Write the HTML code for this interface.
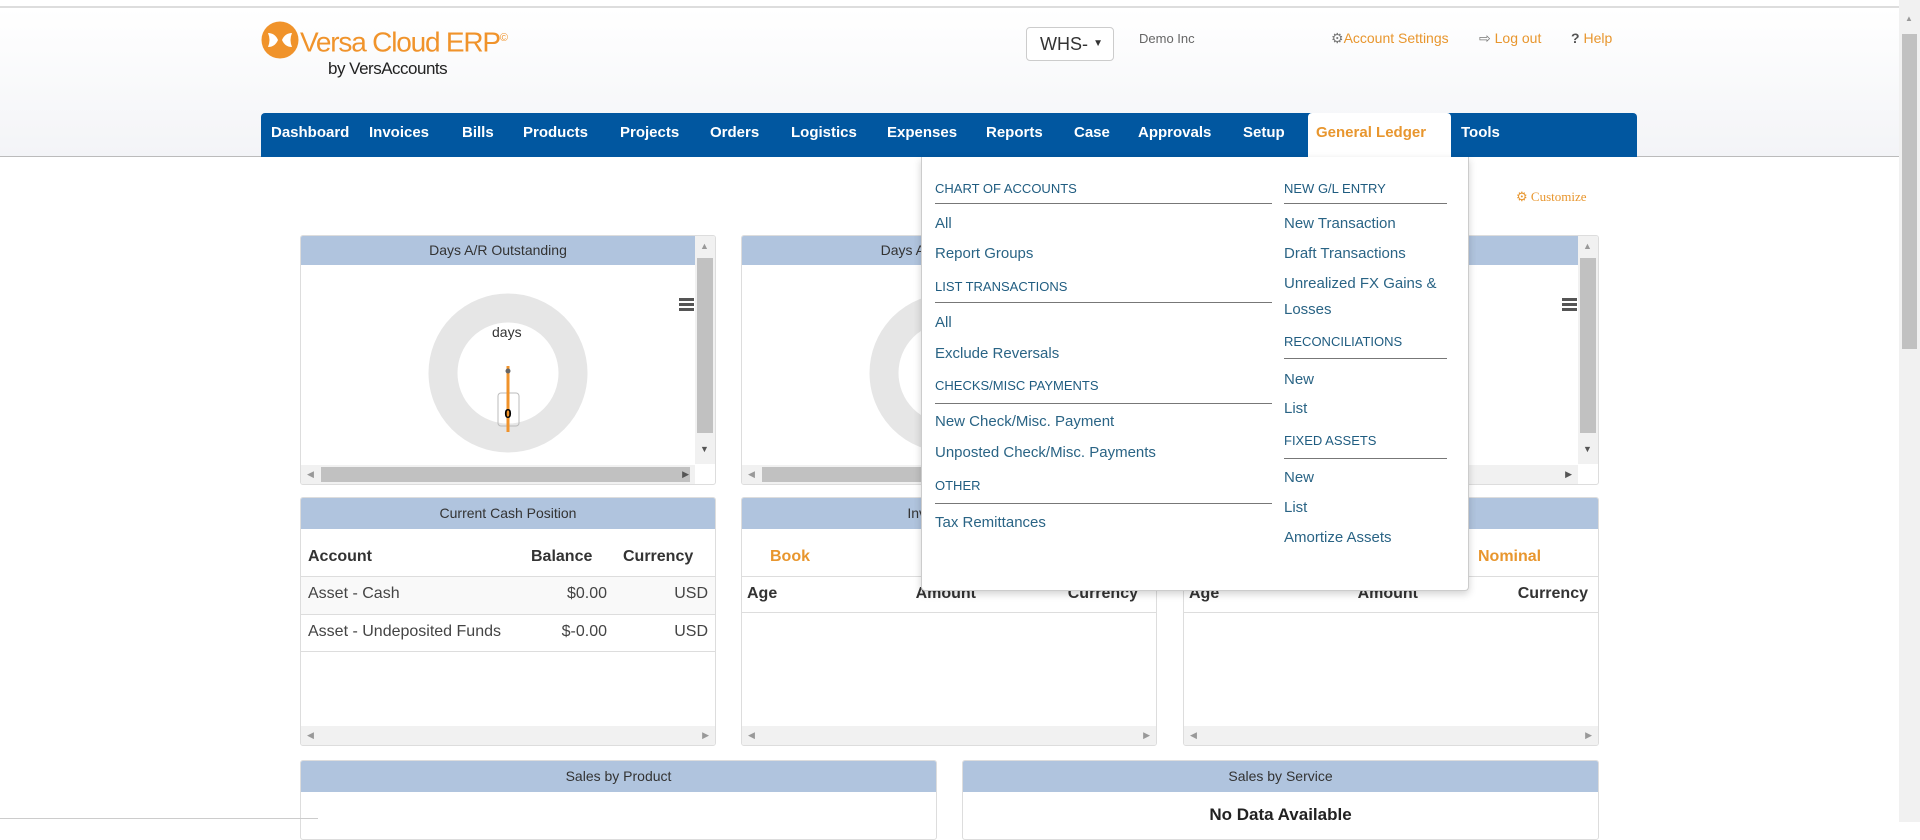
<!DOCTYPE html>
<html><head><meta charset="utf-8"><style>
*{margin:0;padding:0;box-sizing:border-box}
body{width:1920px;height:822px;overflow:hidden;position:relative;background:#fff;font-family:"Liberation Sans",sans-serif;color:#333}
.a{position:absolute;white-space:nowrap}
.hdr{position:absolute;left:0;top:6px;width:1899px;height:151px;background:linear-gradient(#fff,#f3f4f7);border-top:2px solid #ddd;border-bottom:1px solid #bbb}
.nav{position:absolute;left:261px;top:113px;width:1376px;height:44px;background:#0157a0;border-radius:4px 4px 0 0}
.nv{position:absolute;top:124px;color:#fff;font-weight:bold;font-size:15px;line-height:18px}
.w{position:absolute;border:1px solid #ddd;border-radius:3px;background:#fff;overflow:hidden}
.wh{position:absolute;left:0;top:0;right:0;background:#b0c4de;text-align:center;font-size:14px;color:#333}
.hs{position:absolute;left:0;right:0;bottom:0;height:19px;background:#f1f1f1;font-size:9px;color:#999}
.hs .l{position:absolute;left:6px;top:4px}.hs .r{position:absolute;right:6px;top:4px}
.dd{position:absolute;left:921px;top:157px;width:548px;height:434px;background:#fff;border:1px solid #ccc;border-top:none;border-radius:0 0 4px 4px;box-shadow:0 3px 8px rgba(0,0,0,.18)}
.dh{position:absolute;font-size:13px;color:#1f5c80;line-height:16px}
.dl{position:absolute;font-size:15px;color:#2a6485;line-height:18px}
.ln{position:absolute;height:1px;background:#777}
.th{position:absolute;font-weight:bold;font-size:16px;color:#333;line-height:20px}
.td{position:absolute;font-size:16px;color:#444;line-height:20px}
.hl{position:absolute;height:1px;background:#ddd}
</style></head><body>
<div class="hdr"></div>
<svg class="a" style="left:261px;top:21px" width="38" height="38" viewBox="0 0 38 38"><circle cx="19" cy="19" r="18.5" fill="#f0932b"/><path d="M7 12 Q14 12 17 19 Q14 26 7 26 Q10 19 7 12Z M31 12 Q24 12 21 19 Q24 26 31 26 Q28 19 31 12Z" fill="#fff"/></svg>
<div class="a" style="left:300px;top:21px;font-size:28px;color:#f0932b;letter-spacing:-1.2px;line-height:34px">Versa Cloud ERP<sup style="font-size:11px">©</sup></div>
<div class="a" style="left:328px;top:59px;font-size:17px;color:#222;letter-spacing:-.5px">by VersAccounts</div>
<div class="a" style="left:1026px;top:27px;width:88px;height:34px;border:1px solid #ccc;border-radius:4px;background:#fff;font-size:18px;line-height:32px;padding-left:13px;color:#333">WHS- <span style="font-size:10px;position:absolute;right:10px">▼</span></div>
<div class="a" style="left:1139px;top:31px;font-size:13px;color:#666">Demo Inc</div>
<div class="a" style="left:1331px;top:30px;font-size:14px;color:#e8962e"><span style="color:#777">⚙</span>Account Settings</div>
<div class="a" style="left:1479px;top:30px;font-size:14px;color:#e8962e"><span style="color:#777">⇨</span> Log out</div>
<div class="a" style="left:1571px;top:30px;font-size:14px;color:#e8962e"><b style="color:#555">?</b> Help</div>
<div class="a" style="left:1899px;top:0;width:21px;height:822px;background:#f1f1f1"></div>
<div class="a" style="left:1902px;top:34px;width:15px;height:315px;background:#c1c1c1"></div>
<div class="a" style="left:1905px;top:14px;font-size:8px;color:#999">▲</div>
<div class="nav"></div>
<div class="a" style="left:1308px;top:113px;width:143px;height:46px;background:#fff;border-radius:4px 4px 0 0"></div>
<div class="nv" style="left:271px">Dashboard</div>
<div class="nv" style="left:369px">Invoices</div>
<div class="nv" style="left:462px">Bills</div>
<div class="nv" style="left:523px">Products</div>
<div class="nv" style="left:620px">Projects</div>
<div class="nv" style="left:710px">Orders</div>
<div class="nv" style="left:791px">Logistics</div>
<div class="nv" style="left:887px">Expenses</div>
<div class="nv" style="left:986px">Reports</div>
<div class="nv" style="left:1074px">Case</div>
<div class="nv" style="left:1138px">Approvals</div>
<div class="nv" style="left:1243px">Setup</div>
<div class="nv" style="left:1316px;color:#e8962e">General Ledger</div>
<div class="nv" style="left:1461px">Tools</div>
<div class="a" style="left:1516px;top:189px;font-size:13px;color:#e8962e;font-family:'Liberation Serif',serif">⚙ Customize</div>

<div class="w" style="left:300px;top:235px;width:416px;height:250px">
 <div class="wh" style="right:20px;height:29px;line-height:29px">Days A/R Outstanding</div>
 <div class="a" style="right:0;top:0;width:20px;height:228px;background:#f1f1f1;font-size:9px;color:#999"><span style="position:absolute;left:5px;top:5px">▲</span><div style="position:absolute;left:2px;top:22px;width:16px;height:175px;background:#c1c1c1"></div><span style="position:absolute;left:5px;top:208px;color:#555">▼</span></div>
 <div class="hs" style="right:20px"><span class="l">◀</span><div style="position:absolute;left:20px;top:2px;width:369px;height:15px;background:#c1c1c1"></div><span class="r" style="color:#555">▶</span></div>
 <svg class="a" style="left:127px;top:57px" width="160" height="160"><circle cx="80" cy="80" r="65" fill="none" stroke="#e6e6e6" stroke-width="29"/><rect x="70" y="100" width="21" height="33" rx="3" fill="none" stroke="#bbb"/><line x1="80" y1="73" x2="80" y2="139" stroke="#f0932b" stroke-width="3"/><circle cx="80" cy="78" r="2.5" fill="#666"/><text x="80" y="125" text-anchor="middle" font-size="13" font-weight="bold" font-family="Liberation Sans">0</text></svg>
 <div class="a" style="left:191px;top:88px;font-size:14px;color:#333">days</div>
 <div class="a" style="left:378px;top:62px;width:15px;height:3px;background:#555;box-shadow:0 5px #555,0 10px #555"></div>
</div>
<div class="w" style="left:741px;top:235px;width:416px;height:250px">
 <div class="wh" style="height:29px;line-height:29px">Days A/P Outstanding</div>
 <div class="hs"><span class="l">◀</span><div style="position:absolute;left:20px;top:2px;width:369px;height:15px;background:#c1c1c1"></div></div>
 <svg class="a" style="left:127px;top:57px" width="160" height="160"><circle cx="80" cy="80" r="65" fill="none" stroke="#e6e6e6" stroke-width="29"/></svg>
</div>
<div class="w" style="left:1183px;top:235px;width:416px;height:250px">
 <div class="wh" style="right:20px;height:29px;line-height:29px">Days Outstanding</div>
 <div class="a" style="right:0;top:0;width:20px;height:228px;background:#f1f1f1;font-size:9px;color:#999"><span style="position:absolute;left:5px;top:5px">▲</span><div style="position:absolute;left:2px;top:22px;width:16px;height:175px;background:#c1c1c1"></div><span style="position:absolute;left:5px;top:208px;color:#555">▼</span></div>
 <div class="hs" style="right:20px"><span class="r" style="color:#555">▶</span></div>
 <div class="a" style="left:378px;top:62px;width:15px;height:3px;background:#555;box-shadow:0 5px #555,0 10px #555"></div>
</div>

<div class="w" style="left:300px;top:497px;width:416px;height:249px">
 <div class="wh" style="height:31px;line-height:31px">Current Cash Position</div>
 <div class="th" style="left:7px;top:49px">Account</div>
 <div class="th" style="left:230px;top:49px">Balance</div>
 <div class="th" style="left:322px;top:49px">Currency</div>
 <div class="hl" style="left:0;right:0;top:78px"></div>
 <div class="a" style="left:0;right:0;top:79px;height:37px;background:#f9f9f9"></div>
 <div class="td" style="left:7px;top:86px">Asset - Cash</div>
 <div class="td" style="right:108px;top:86px">$0.00</div>
 <div class="td" style="right:7px;top:86px">USD</div>
 <div class="hl" style="left:0;right:0;top:116px"></div>
 <div class="td" style="left:7px;top:124px">Asset - Undeposited Funds</div>
 <div class="td" style="right:108px;top:124px">$-0.00</div>
 <div class="td" style="right:7px;top:124px">USD</div>
 <div class="hl" style="left:0;right:0;top:153px"></div>
 <div class="hs"><span class="l">◀</span><span class="r">▶</span></div>
</div>
<div class="w" style="left:741px;top:497px;width:416px;height:249px">
 <div class="wh" style="height:31px;line-height:31px">Invoice Aging</div>
 <div class="th" style="left:28px;top:49px;color:#e8962e">Book</div>
 <div class="hl" style="left:0;right:0;top:78px"></div>
 <div class="th" style="left:5px;top:86px">Age</div>
 <div class="th" style="right:180px;top:86px">Amount</div>
 <div class="th" style="right:18px;top:86px">Currency</div>
 <div class="hl" style="left:0;right:0;top:114px"></div>
 <div class="hs"><span class="l">◀</span><span class="r">▶</span></div>
</div>
<div class="w" style="left:1183px;top:497px;width:416px;height:249px">
 <div class="wh" style="height:31px;line-height:31px">Bill Aging</div>
 <div class="th" style="left:294px;top:49px;color:#e8962e">Nominal</div>
 <div class="hl" style="left:0;right:0;top:78px"></div>
 <div class="th" style="left:5px;top:86px">Age</div>
 <div class="th" style="right:180px;top:86px">Amount</div>
 <div class="th" style="right:10px;top:86px">Currency</div>
 <div class="hl" style="left:0;right:0;top:114px"></div>
 <div class="hs"><span class="l">◀</span><span class="r">▶</span></div>
</div>

<div class="w" style="left:300px;top:760px;width:637px;height:80px">
 <div class="wh" style="height:31px;line-height:31px">Sales by Product</div>
</div>
<div class="w" style="left:962px;top:760px;width:637px;height:80px">
 <div class="wh" style="height:31px;line-height:31px">Sales by Service</div>
 <div class="a" style="left:0;right:0;top:44px;text-align:center;font-weight:bold;font-size:17px;color:#222">No Data Available</div>
</div>
<div class="a" style="left:0;top:818px;width:318px;height:1px;background:#ccc"></div>

<div class="dd">
 <div class="dh" style="left:13px;top:24px">CHART OF ACCOUNTS</div>
 <div class="ln" style="left:13px;top:46px;width:337px"></div>
 <div class="dl" style="left:13px;top:58px">All</div>
 <div class="dl" style="left:13px;top:88px">Report Groups</div>
 <div class="dh" style="left:13px;top:122px">LIST TRANSACTIONS</div>
 <div class="ln" style="left:13px;top:145px;width:337px"></div>
 <div class="dl" style="left:13px;top:157px">All</div>
 <div class="dl" style="left:13px;top:188px">Exclude Reversals</div>
 <div class="dh" style="left:13px;top:221px">CHECKS/MISC PAYMENTS</div>
 <div class="ln" style="left:13px;top:246px;width:337px"></div>
 <div class="dl" style="left:13px;top:256px">New Check/Misc. Payment</div>
 <div class="dl" style="left:13px;top:287px">Unposted Check/Misc. Payments</div>
 <div class="dh" style="left:13px;top:321px">OTHER</div>
 <div class="ln" style="left:13px;top:346px;width:337px"></div>
 <div class="dl" style="left:13px;top:357px">Tax Remittances</div>

 <div class="dh" style="left:362px;top:24px">NEW G/L ENTRY</div>
 <div class="ln" style="left:362px;top:46px;width:163px"></div>
 <div class="dl" style="left:362px;top:58px">New Transaction</div>
 <div class="dl" style="left:362px;top:88px">Draft Transactions</div>
 <div class="dl" style="left:362px;top:118px">Unrealized FX Gains &amp;</div>
 <div class="dl" style="left:362px;top:144px">Losses</div>
 <div class="dh" style="left:362px;top:177px">RECONCILIATIONS</div>
 <div class="ln" style="left:362px;top:201px;width:163px"></div>
 <div class="dl" style="left:362px;top:214px">New</div>
 <div class="dl" style="left:362px;top:243px">List</div>
 <div class="dh" style="left:362px;top:276px">FIXED ASSETS</div>
 <div class="ln" style="left:362px;top:301px;width:163px"></div>
 <div class="dl" style="left:362px;top:312px">New</div>
 <div class="dl" style="left:362px;top:342px">List</div>
 <div class="dl" style="left:362px;top:372px">Amortize Assets</div>
</div>
</body></html>
